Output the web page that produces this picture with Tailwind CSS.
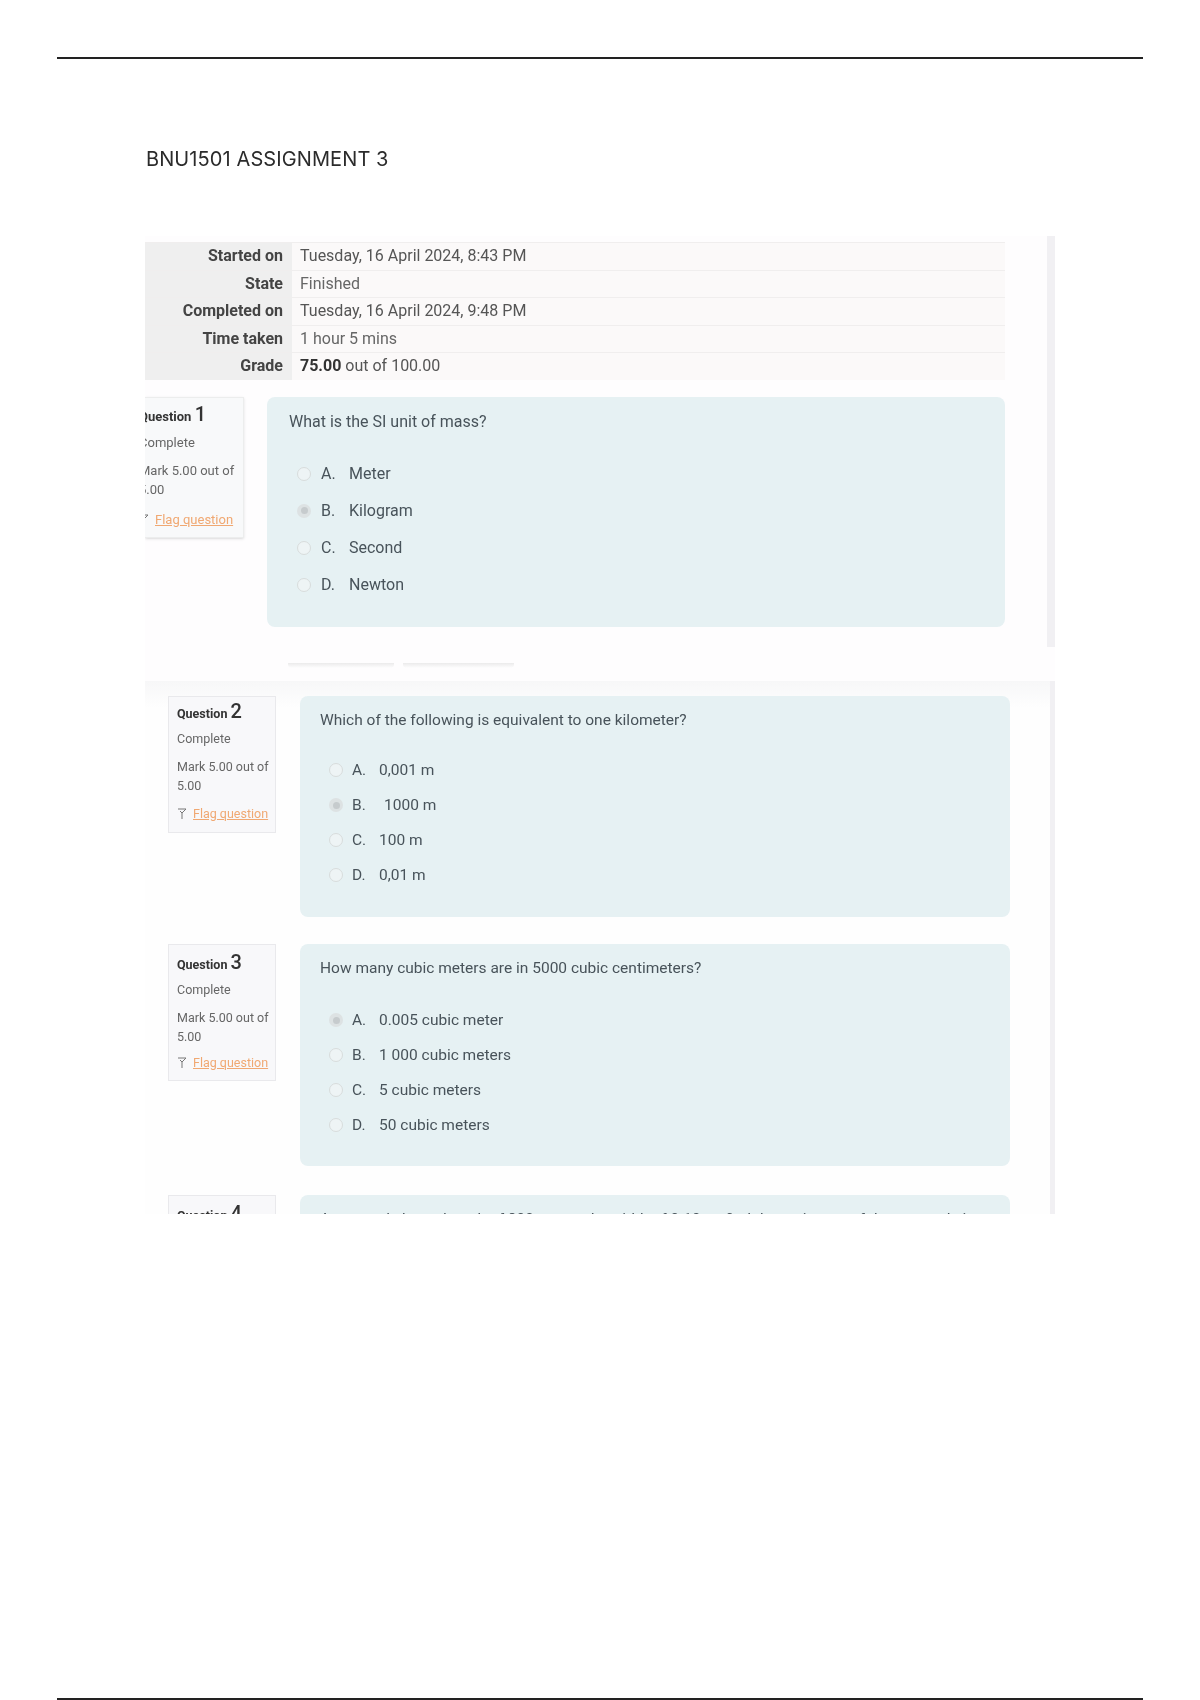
<!DOCTYPE html>
<html lang="en">
<head>
<meta charset="utf-8">
<title>BNU1501 ASSIGNMENT 3</title>
<script src="https://cdn.jsdelivr.net/npm/@tailwindcss/browser@4"></script>
</head>
<body class="bg-white font-['Roboto',sans-serif] h-[1700px] overflow-hidden flex flex-col text-[#48535a]">
  <!-- top rule -->
  <div class="mt-[57px] ml-[57px] w-[1086px] h-[2px] bg-[#222] shrink-0"></div>

  <h1 class="ml-[146px] mt-[88px] text-[20px] leading-[24px] tracking-[0.1px] text-[#2b2b2b] font-['Inter',sans-serif] blur-[0.3px]">BNU1501 ASSIGNMENT 3</h1>

  <!-- first capture: summary table + question 1 -->
  <div class="relative ml-[145px] mt-[65px] w-[910px] h-[445px] shrink-0 bg-[#fefdfe] overflow-hidden pt-[6px] blur-[0.5px]">
    <div class="absolute right-0 top-0 w-[8px] h-[411px] bg-[#f1f0f3]"></div>

    <div class="w-[860px] border-t border-[#f0eeee] text-[16px] leading-[26.5px] text-[#555]">
      <div class="flex border-b border-[#f0eeee]"><div class="w-[147px] bg-[#efefef] pr-[9px] text-right font-bold text-[#444]">Started on</div><div class="flex-1 bg-[#fbf9f9] pl-[8px]">Tuesday, 16 April 2024, 8:43 PM</div></div>
      <div class="flex border-b border-[#f0eeee]"><div class="w-[147px] bg-[#efefef] pr-[9px] text-right font-bold text-[#444]">State</div><div class="flex-1 bg-[#fbf9f9] pl-[8px] text-[#666]">Finished</div></div>
      <div class="flex border-b border-[#f0eeee]"><div class="w-[147px] bg-[#efefef] pr-[9px] text-right font-bold text-[#444]">Completed on</div><div class="flex-1 bg-[#fbf9f9] pl-[8px]">Tuesday, 16 April 2024, 9:48 PM</div></div>
      <div class="flex border-b border-[#f0eeee]"><div class="w-[147px] bg-[#efefef] pr-[9px] text-right font-bold text-[#444]">Time taken</div><div class="flex-1 bg-[#fbf9f9] pl-[8px] text-[#666]">1 hour 5 mins</div></div>
      <div class="flex"><div class="w-[147px] bg-[#efefef] pr-[9px] text-right font-bold text-[#444]">Grade</div><div class="flex-1 bg-[#fbf9f9] pl-[8px]"><b class="text-[#333]">75.00</b> out of 100.00</div></div>
    </div>

    <div class="flex mt-[17px] w-[860px]">
      <div class="w-[99px] h-[141px] shrink-0 overflow-hidden bg-[#f8f9fa] border-r border-b border-t border-[#eceded] shadow-sm">
        <div class="-ml-[6px] w-[110px] pt-[4px] text-[13px] leading-[18px]">
          <div class="h-[24px] leading-[24px] whitespace-nowrap text-[#333]"><b>Question</b> <span class="text-[20px] font-medium">1</span></div>
          <div class="mt-[8px] text-[#666]">Complete</div>
          <div class="mt-[9px] w-[104px] leading-[19px] text-[#666]">Mark 5.00 out of 5.00</div>
          <div class="mt-[12px] flex items-center gap-[6px]"><svg class="w-[10px] h-[12px]" viewBox="0 0 10 12" fill="none" stroke="#777"><path d="M1 1h8L5 5v6M3 3l2 2"/></svg><span class="underline text-[#f0a872]">Flag question</span></div>
        </div>
      </div>
      <div class="ml-[23px] flex-1 h-[230px] rounded-[8px] bg-[#e6f1f3] pl-[22px] pt-[15px] text-[16px] leading-[20px]">
        <p>What is the SI unit of mass?</p>
        <div class="mt-[32px] flex flex-col gap-[17px] pl-[8px]">
          <div class="flex items-center"><span class="w-[14px] h-[14px] rounded-full border border-[#d8dcdc] bg-[#eef4f5]"></span><span class="w-[28px] ml-[10px]">A.</span>Meter</div>
          <div class="flex items-center"><span class="w-[14px] h-[14px] rounded-full bg-[#dde2e3] flex items-center justify-center"><span class="w-[7px] h-[7px] rounded-full bg-[#c6cbcd]"></span></span><span class="w-[28px] ml-[10px]">B.</span>Kilogram</div>
          <div class="flex items-center"><span class="w-[14px] h-[14px] rounded-full border border-[#d8dcdc] bg-[#eef4f5]"></span><span class="w-[28px] ml-[10px]">C.</span>Second</div>
          <div class="flex items-center"><span class="w-[14px] h-[14px] rounded-full border border-[#d8dcdc] bg-[#eef4f5]"></span><span class="w-[28px] ml-[10px]">D.</span>Newton</div>
        </div>
      </div>
    </div>

    <!-- bottom edge of two cut off buttons -->
    <div class="flex gap-[9px] ml-[143px] mt-[36px]">
      <div class="w-[106px] h-[5px] rounded-b bg-gradient-to-b from-[#ebebeb] to-transparent"></div>
      <div class="w-[111px] h-[5px] rounded-b bg-gradient-to-b from-[#ebebeb] to-transparent"></div>
    </div>
  </div>

  <!-- second capture: questions 2 to 4 -->
  <div class="relative ml-[145px] w-[910px] h-[533px] shrink-0 overflow-hidden bg-gradient-to-b from-[#f7f7f8] to-[#fefefe] to-[5%] pt-[15px] pl-[23px] blur-[0.5px] text-[15.5px] leading-[20px]">
    <div class="absolute right-0 top-0 w-[5px] h-full bg-[#f1f0f3]"></div>

    <div class="flex items-start mb-[27px]">
      <div class="w-[108px] h-[137px] shrink-0 bg-[#f8f8fa] border border-[#e9e9ec] pl-[8px] pt-[2px] text-[12.5px] leading-[18px]">
        <div class="h-[24px] leading-[24px] whitespace-nowrap text-[#333]"><b>Question</b> <span class="text-[20px] font-medium">2</span></div>
        <div class="mt-[7px] text-[#666]">Complete</div>
        <div class="mt-[9px] leading-[19px] text-[#666]">Mark 5.00 out of 5.00</div>
        <div class="mt-[10px] flex items-center gap-[6px]"><svg class="w-[10px] h-[12px]" viewBox="0 0 10 12" fill="none" stroke="#777"><path d="M1 1h8L5 5v6M3 3l2 2"/></svg><span class="underline text-[#f0a872]">Flag question</span></div>
      </div>
      <div class="ml-[24px] w-[710px] h-[221px] rounded-[8px] bg-[#e6f1f3] pl-[20px] pt-[14px]">
        <p>Which of the following is equivalent to one kilometer?</p>
        <div class="mt-[30px] flex flex-col gap-[15px] pl-[9px]">
          <div class="flex items-center"><span class="w-[14px] h-[14px] rounded-full border border-[#d8dcdc] bg-[#eef4f5]"></span><span class="w-[27px] ml-[9px]">A.</span>0,001 m</div>
          <div class="flex items-center"><span class="w-[14px] h-[14px] rounded-full bg-[#dde2e3] flex items-center justify-center"><span class="w-[7px] h-[7px] rounded-full bg-[#c6cbcd]"></span></span><span class="w-[32px] ml-[9px]">B.</span>1000 m</div>
          <div class="flex items-center"><span class="w-[14px] h-[14px] rounded-full border border-[#d8dcdc] bg-[#eef4f5]"></span><span class="w-[27px] ml-[9px]">C.</span>100 m</div>
          <div class="flex items-center"><span class="w-[14px] h-[14px] rounded-full border border-[#d8dcdc] bg-[#eef4f5]"></span><span class="w-[27px] ml-[9px]">D.</span>0,01 m</div>
        </div>
      </div>
    </div>

    <div class="flex items-start mb-[29px]">
      <div class="w-[108px] h-[137px] shrink-0 bg-[#f8f8fa] border border-[#e9e9ec] pl-[8px] pt-[5px] text-[12.5px] leading-[18px]">
        <div class="h-[24px] leading-[24px] whitespace-nowrap text-[#333]"><b>Question</b> <span class="text-[20px] font-medium">3</span></div>
        <div class="mt-[7px] text-[#666]">Complete</div>
        <div class="mt-[9px] leading-[19px] text-[#666]">Mark 5.00 out of 5.00</div>
        <div class="mt-[8px] flex items-center gap-[6px]"><svg class="w-[10px] h-[12px]" viewBox="0 0 10 12" fill="none" stroke="#777"><path d="M1 1h8L5 5v6M3 3l2 2"/></svg><span class="underline text-[#f0a872]">Flag question</span></div>
      </div>
      <div class="ml-[24px] w-[710px] h-[222px] rounded-[8px] bg-[#e6f1f3] pl-[20px] pt-[14px]">
        <p>How many cubic meters are in 5000 cubic centimeters?</p>
        <div class="mt-[32px] flex flex-col gap-[15px] pl-[9px]">
          <div class="flex items-center"><span class="w-[14px] h-[14px] rounded-full bg-[#dde2e3] flex items-center justify-center"><span class="w-[7px] h-[7px] rounded-full bg-[#c6cbcd]"></span></span><span class="w-[27px] ml-[9px]">A.</span>0.005 cubic meter</div>
          <div class="flex items-center"><span class="w-[14px] h-[14px] rounded-full border border-[#d8dcdc] bg-[#eef4f5]"></span><span class="w-[27px] ml-[9px]">B.</span>1 000 cubic meters</div>
          <div class="flex items-center"><span class="w-[14px] h-[14px] rounded-full border border-[#d8dcdc] bg-[#eef4f5]"></span><span class="w-[27px] ml-[9px]">C.</span>5 cubic meters</div>
          <div class="flex items-center"><span class="w-[14px] h-[14px] rounded-full border border-[#d8dcdc] bg-[#eef4f5]"></span><span class="w-[27px] ml-[9px]">D.</span>50 cubic meters</div>
        </div>
      </div>
    </div>

    <div class="flex items-start">
      <div class="w-[108px] h-[137px] shrink-0 bg-[#f8f8fa] border border-[#e9e9ec] pl-[8px] pt-[5px] text-[12.5px] leading-[18px]">
        <div class="h-[24px] leading-[24px] whitespace-nowrap text-[#333]"><b>Question</b> <span class="text-[20px] font-medium">4</span></div>
      </div>
      <div class="ml-[24px] w-[710px] h-[222px] rounded-[8px] bg-[#e6f1f3] pl-[20px] pt-[14px]">
        <p>A rectangle has a length of 800 mm and a width of 0.10 m; find the perimeter of the rectangle in</p>
      </div>
    </div>
  </div>

  <!-- bottom rule -->
  <div class="mt-auto ml-[57px] w-[1086px] h-[2px] bg-[#222] shrink-0"></div>
</body>
</html>
